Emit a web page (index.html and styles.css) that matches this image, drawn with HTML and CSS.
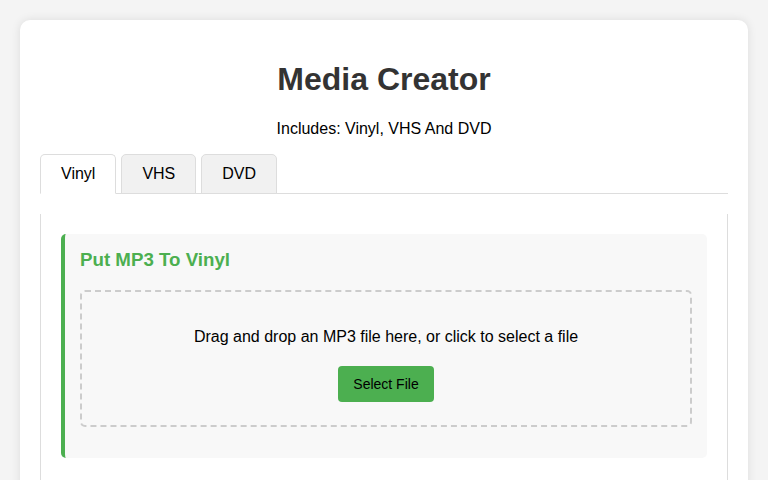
FILE: index.html
```html
<!DOCTYPE html>
<html lang="en">
<head>
<meta charset="utf-8">
<title>Media Creator</title>
<link rel="stylesheet" href="styles.css">
</head>
<body>
<div class="container">
  <h1 class="title">Media Creator</h1>
  <p class="subtitle">Includes: Vinyl, VHS And DVD</p>
  <div class="tabs">
    <button class="tab active">Vinyl</button>
    <button class="tab">VHS</button>
    <button class="tab">DVD</button>
  </div>
  <div class="panel">
    <div class="card">
      <h3 class="card-title">Put MP3 To Vinyl</h3>
      <div class="dropzone">
        <p class="drop-text">Drag and drop an MP3 file here, or click to select a file</p>
        <button class="select-btn">Select File</button>
      </div>
    </div>
  </div>
</div>
</body>
</html>
```

FILE: styles.css
```css
html, body {
  margin: 0;
  padding: 0;
}
body {
  background: #f4f4f4;
  font-family: "Liberation Sans", Arial, sans-serif;
  color: #000;
  padding: 20px;
}
.container {
  background: #fff;
  border-radius: 10px;
  box-shadow: 0 0 10px rgba(0, 0, 0, 0.1);
  padding: 20px;
}
.title {
  font-size: 32px;
  font-weight: bold;
  color: #333;
  text-align: center;
  margin: 21px 0 22px;
}
.subtitle {
  font-size: 16px;
  text-align: center;
  margin: 0 0 16px;
}
.tabs {
  display: flex;
  gap: 5px;
  border-bottom: 1px solid #ddd;
  margin-bottom: 20px;
}
.tab {
  font-family: "Liberation Sans", Arial, sans-serif;
  font-size: 16px;
  color: #000;
  background: #f1f1f1;
  border: 1px solid #ddd;
  border-radius: 5px 5px 0 0;
  padding: 10px 20px;
  margin-bottom: -1px;
  line-height: normal;
}
.tab.active {
  background: #fff;
  border-bottom-color: #fff;
}
.panel {
  border: 1px solid #ddd;
  border-top: none;
  padding: 20px 20px 120px;
}
.card {
  background: #f8f8f8;
  border-left: 4px solid #4CAF50;
  border-radius: 5px;
  padding: 15px;
}
.card-title {
  color: #4CAF50;
  font-size: 18.72px;
  font-weight: bold;
  margin: 0 0 19px;
}
.dropzone {
  border: 2px dashed #ccc;
  border-radius: 5px;
  padding: 20px 20px 23px;
  text-align: center;
  margin-bottom: 16px;
}
.drop-text {
  font-size: 16px;
  margin: 16px 0 20px;
}
.select-btn {
  font-family: "Liberation Sans", Arial, sans-serif;
  font-size: 14px;
  color: #000;
  background: #4CAF50;
  border: none;
  border-radius: 4px;
  padding: 10px 15px;
  width: 96px;
  height: 36px;
}
```
